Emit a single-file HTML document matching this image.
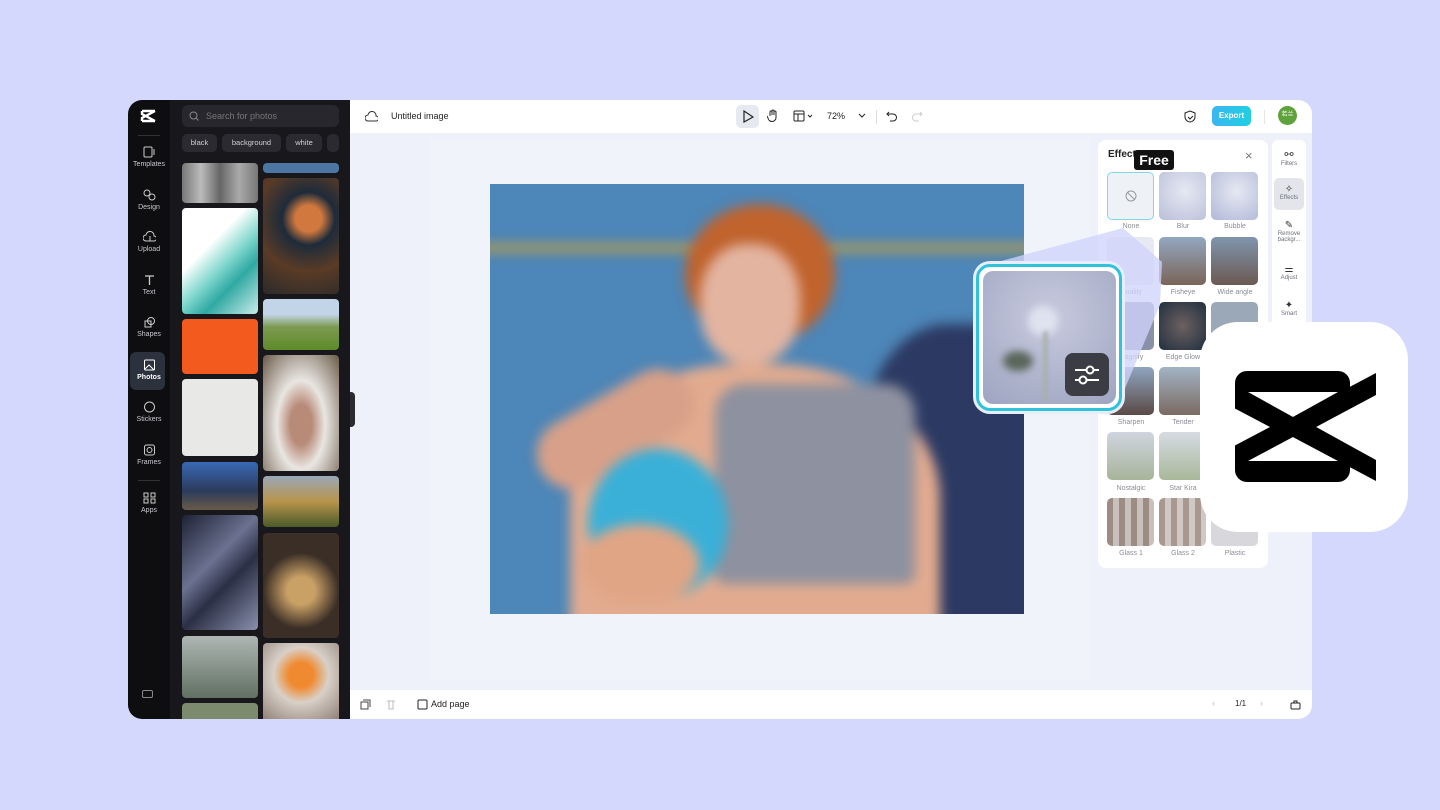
<!DOCTYPE html><html><head><meta charset="utf-8"><style>
*{box-sizing:border-box;margin:0;padding:0}
body{width:1440px;height:810px;background:#d4d8fd;font-family:"Liberation Sans",sans-serif;position:relative;overflow:hidden}
.a{position:absolute}
.frame{left:128px;top:100px;width:1184px;height:619px;border-radius:14px;overflow:hidden;background:#eef1f9}
.rail{left:0;top:0;width:42px;height:619px;background:#0e0e11}
.panel{left:42px;top:0;width:180px;height:619px;background:#18181c}
.ri{position:absolute;left:0;width:42px;text-align:center;color:#c9c9cf;font-size:7px}
.ri svg{display:block;margin:0 auto 3px}
.chip{position:absolute;top:34px;height:18px;border-radius:5px;background:#2a2a30;color:#d0d0d6;font-size:7.5px;line-height:18px;text-align:center}
.ph{position:absolute;border-radius:4px}
.top{left:222px;top:0;width:962px;height:34px;background:#fff;border-bottom:1px solid #eef0f4}
.bot{left:222px;top:590px;width:962px;height:29px;background:#fff}
.th{position:absolute;width:47px;height:48px;border-radius:5px}
.lb{position:absolute;width:60px;text-align:center;font-size:7px;color:#8a8d96}
.rr{position:absolute;left:1272px;width:34px;text-align:center;font-size:6px;color:#6c6f78}
</style></head><body>
<div class="a frame">
 <div class="a rail">
  <svg class="a" style="left:12px;top:9px" width="18" height="14" viewBox="0 0 18 14"><path d="M2 2h13M2 12h13M2 2v3l13 7M2 12v-3l13-7" stroke="#fff" stroke-width="2.4" fill="none"/></svg>
  <div class="a" style="left:10px;top:35px;width:22px;height:1px;background:#333"></div>
  <div class="ri" style="top:46px"><svg width="13" height="12"><rect x="1" y="1" width="8" height="10" rx="1" stroke="#ccc" fill="none"/><path d="M11 3v6" stroke="#ccc"/></svg>Templates</div>
  <div class="ri" style="top:89px"><svg width="13" height="12"><circle cx="4" cy="4" r="3" stroke="#ccc" fill="none"/><circle cx="9" cy="8" r="3" stroke="#ccc" fill="none"/></svg>Design</div>
  <div class="ri" style="top:131px"><svg width="13" height="12"><path d="M3 10a3 3 0 010-6a4 4 0 018 1a2.5 2.5 0 010 5z M7 5v5" stroke="#ccc" fill="none"/></svg>Upload</div>
  <div class="ri" style="top:174px"><svg width="13" height="12"><path d="M2 2h9M6.5 2v9" stroke="#ccc" stroke-width="1.3"/></svg>Text</div>
  <div class="ri" style="top:216px"><svg width="13" height="12"><circle cx="8" cy="5" r="3.5" stroke="#ccc" fill="none"/><rect x="2" y="5" width="6" height="6" stroke="#ccc" fill="none"/></svg>Shapes</div>
  <div class="a" style="left:2px;top:252px;width:35px;height:38px;border-radius:6px;background:#2b313d"></div>
  <div class="ri" style="top:259px;color:#fff;font-weight:bold"><svg width="13" height="12"><rect x="1.5" y="1" width="10" height="10" rx="1" stroke="#fff" fill="none"/><path d="M2 10l4-4 5 5" stroke="#fff" fill="none"/></svg>Photos</div>
  <div class="ri" style="top:301px"><svg width="13" height="12"><circle cx="6.5" cy="6" r="5" stroke="#ccc" fill="none"/></svg>Stickers</div>
  <div class="ri" style="top:344px"><svg width="13" height="12"><rect x="1.5" y="1" width="10" height="10" rx="2" stroke="#ccc" fill="none"/><circle cx="6.5" cy="6" r="2.5" stroke="#ccc" fill="none"/></svg>Frames</div>
  <div class="a" style="left:10px;top:380px;width:22px;height:1px;background:#333"></div>
  <div class="ri" style="top:392px"><svg width="13" height="12"><rect x="1" y="1" width="4" height="4" stroke="#ccc" fill="none"/><rect x="8" y="1" width="4" height="4" stroke="#ccc" fill="none"/><rect x="1" y="7" width="4" height="4" stroke="#ccc" fill="none"/><rect x="8" y="7" width="4" height="4" stroke="#ccc" fill="none"/></svg>Apps</div>
  <div class="a" style="left:14px;top:590px;width:11px;height:8px;border:1px solid #888;border-radius:2px"></div>
 </div>
 <div class="a panel">
  <div class="a" style="left:12px;top:5px;width:157px;height:22px;border-radius:6px;background:#27272d;color:#777;font-size:9px;line-height:22px;padding-left:24px">Search for photos</div>
  <svg class="a" style="left:19px;top:11px" width="10" height="10"><circle cx="4.5" cy="4.5" r="3.5" stroke="#888" fill="none"/><path d="M7 7l2.5 2.5" stroke="#888"/></svg>
  <div class="chip" style="left:12px;width:35px">black</div>
  <div class="chip" style="left:52px;width:59px">background</div>
  <div class="chip" style="left:116px;width:36px">white</div>
  <div class="chip" style="left:157px;width:12px"></div>
  <div class="ph" style="left:12px;top:63px;width:76px;height:40px;background:linear-gradient(90deg,#777,#bbb,#666,#aaa,#777)"></div>
  <div class="ph" style="left:12px;top:108px;width:76px;height:106px;background:linear-gradient(135deg,#fff 35%,#7cd6cc 55%,#2fa9a3 70%,#c9ecea)"></div>
  <div class="ph" style="left:12px;top:219px;width:76px;height:55px;background:#f25a1e"></div>
  <div class="ph" style="left:12px;top:279px;width:76px;height:77px;background:#e8e8e6"></div>
  <div class="ph" style="left:12px;top:362px;width:76px;height:48px;background:linear-gradient(#3a69b5,#2b3b5b 60%,#6a5a4a)"></div>
  <div class="ph" style="left:12px;top:415px;width:76px;height:115px;background:linear-gradient(135deg,#1e2235,#6b7190 40%,#2b2f45 60%,#8a90ad)"></div>
  <div class="ph" style="left:12px;top:536px;width:76px;height:62px;background:linear-gradient(#aeb7b4,#617062)"></div>
  <div class="ph" style="left:12px;top:603px;width:76px;height:20px;background:#7c8a6e"></div>
  <div class="ph" style="left:93px;top:63px;width:76px;height:10px;background:#4d76a3"></div>
  <div class="ph" style="left:93px;top:78px;width:76px;height:116px;background:radial-gradient(circle at 60% 35%,#d0783e 15%,#1e2b3a 30%,#5a3b26 60%,#2a2a2a)"></div>
  <div class="ph" style="left:93px;top:199px;width:76px;height:51px;background:linear-gradient(#c2d5e8 30%,#7d9a4f 55%,#5e8b2a)"></div>
  <div class="ph" style="left:93px;top:255px;width:76px;height:116px;background:radial-gradient(ellipse at 50% 60%,#b88a78 20%,#e9e6e2 45%,#6a5a48)"></div>
  <div class="ph" style="left:93px;top:376px;width:76px;height:51px;background:linear-gradient(#9aa8b9,#b8944b 50%,#4a5a2a)"></div>
  <div class="ph" style="left:93px;top:433px;width:76px;height:105px;background:radial-gradient(circle at 50% 55%,#c9a066 20%,#3a2e26 55%)"></div>
  <div class="ph" style="left:93px;top:543px;width:76px;height:80px;background:radial-gradient(circle at 50% 40%,#f08a30 20%,#d8d0c8 45%,#8a7a70)"></div>
 </div>
 <div class="a" style="left:222px;top:292px;width:5px;height:35px;background:#2a2a30;border-radius:0 4px 4px 0"></div>
 <div class="a top">
  <svg class="a" style="left:15px;top:11px" width="13" height="12"><path d="M3 10a3 3 0 010-6a4 4 0 018 1a2.5 2.5 0 010 5z" stroke="#333" fill="none"/></svg>
  <div class="a" style="left:41px;top:11px;font-size:9px;color:#222">Untitled image</div>
  <div class="a" style="left:386px;top:5px;width:23px;height:23px;border-radius:5px;background:#e7e9f0"></div>
  <svg class="a" style="left:392px;top:10px" width="12" height="13"><path d="M2 1l9 6-9 5z" stroke="#222" fill="none" stroke-width="1.2"/></svg>
  <svg class="a" style="left:417px;top:9px" width="12" height="14"><path d="M3 7V3a1 1 0 012 0v3V2a1 1 0 012 0v4V3a1 1 0 012 0v5a4 4 0 01-8 1l-1-2" stroke="#222" fill="none"/></svg>
  <svg class="a" style="left:443px;top:10px" width="22" height="12"><rect x="1" y="1" width="10" height="10" rx="1" stroke="#222" fill="none"/><path d="M1 4h10M5 4v7M15 5l2 2 2-2" stroke="#222" fill="none"/></svg>
  <div class="a" style="left:477px;top:11px;font-size:9px;color:#222">72%</div>
  <svg class="a" style="left:508px;top:13px" width="8" height="6"><path d="M1 1l3 3 3-3" stroke="#222" fill="none"/></svg>
  <div class="a" style="left:526px;top:10px;width:1px;height:14px;background:#ddd"></div>
  <svg class="a" style="left:536px;top:10px" width="12" height="12"><path d="M3 2L1 4l2 2M1 4h6a3 3 0 010 7H4" stroke="#222" fill="none"/></svg>
  <svg class="a" style="left:561px;top:10px" width="12" height="12"><path d="M9 2l2 2-2 2M11 4H5a3 3 0 000 7h3" stroke="#ccc" fill="none"/></svg>
  <svg class="a" style="left:834px;top:10px" width="12" height="13"><path d="M6 1l5 2v4c0 3-3 5-5 5s-5-2-5-5V3z M4 7l2 2 3-3" stroke="#222" fill="none"/></svg>
  <div class="a" style="left:862px;top:6px;width:39px;height:20px;border-radius:5px;background:linear-gradient(90deg,#3bb6f0,#20cfe0);color:#fff;font-size:8px;font-weight:bold;text-align:center;line-height:20px">Export</div>
  <div class="a" style="left:914px;top:10px;width:1px;height:14px;background:#e5e5e5"></div>
  <div class="a" style="left:928px;top:6px;width:19px;height:19px;border-radius:50%;background:#5ea23b;color:#fff;font-size:6px;text-align:center;line-height:19px">若兰</div>
 </div>
 <div class="a bot">
  <svg class="a" style="left:10px;top:9px" width="11" height="11"><rect x="1" y="3" width="7" height="7" stroke="#444" fill="none"/><path d="M3 1h7v7" stroke="#444" fill="none"/></svg>
  <svg class="a" style="left:36px;top:9px" width="10" height="11"><path d="M1 2h8M3 2v8h4V2" stroke="#bbb" fill="none"/></svg>
  <svg class="a" style="left:67px;top:9px" width="11" height="11"><rect x="1" y="1" width="9" height="9" rx="1" stroke="#222" fill="none"/></svg>
  <div class="a" style="left:81px;top:9px;font-size:9px;color:#222">Add page</div>
  <div class="a" style="left:862px;top:8px;font-size:9px;color:#bbb">‹</div>
  <div class="a" style="left:885px;top:9px;font-size:8px;color:#222">1/1</div>
  <div class="a" style="left:910px;top:8px;font-size:9px;color:#bbb">›</div>
  <svg class="a" style="left:940px;top:9px" width="11" height="11"><rect x="1" y="4" width="9" height="6" rx="1" stroke="#222" fill="none"/><path d="M4 4V2h3v2" stroke="#222" fill="none"/></svg>
 </div>
 <div class="a" style="left:302px;top:40px;width:660px;height:540px;background:#f1f3fa"></div>
 <div class="a" style="left:362px;top:84px;width:534px;height:430px;overflow:hidden;background:#4d86b8">
  <div style="position:absolute;inset:-20px;filter:blur(6px)">
   <div class="a" style="left:0;top:80px;width:580px;height:8px;background:#b99c4a"></div>
   <div class="a" style="left:390px;top:160px;width:220px;height:320px;background:#2c3a63;border-radius:40% 10% 0 0"></div>
   <div class="a" style="left:215px;top:40px;width:150px;height:140px;border-radius:50%;background:#c0632d"></div>
   <div class="a" style="left:230px;top:80px;width:100px;height:120px;border-radius:45%;background:#e3b4a0"></div>
   <div class="a" style="left:100px;top:200px;width:370px;height:300px;border-radius:45% 45% 0 0;background:#e2ab8f"></div>
   <div class="a" style="left:60px;top:230px;width:170px;height:70px;border-radius:40px;background:#d8a088;transform:rotate(-30deg)"></div>
   <div class="a" style="left:245px;top:220px;width:200px;height:200px;border-radius:30px 30px 10px 10px;background:#8e919f"></div>
   <div class="a" style="left:118px;top:285px;width:140px;height:150px;border-radius:50%;background:#3ab0d8"></div>
   <div class="a" style="left:110px;top:360px;width:120px;height:80px;border-radius:50%;background:#e0a585"></div>
  </div>
 </div>
</div>

<!-- effects panel -->
<div class="a" style="left:1098px;top:140px;width:170px;height:428px;background:#fff;border-radius:8px"></div>
<div class="a" style="left:1108px;top:149px;font-size:10px;font-weight:bold;color:#222">Effect</div>
<div class="a" style="left:1134px;top:150px;width:40px;height:20px;background:#111;border-radius:3px;color:#fff;font-size:14px;font-weight:bold;text-align:center;line-height:20px">Free</div>
<div class="a" style="left:1245px;top:148px;font-size:13px;color:#777">×</div>
<div class="th" style="left:1107px;top:172px;background:#eef1f6;border:1.5px solid #7fd9e3"></div>
<svg class="a" style="left:1125px;top:190px" width="12" height="12"><circle cx="6" cy="6" r="5" stroke="#999" fill="none"/><path d="M2.5 2.5l7 7" stroke="#999"/></svg>
<div class="th" style="left:1159px;top:172px;background:radial-gradient(circle at 55% 40%,#e6e8f2,#b9bfd8)"></div>
<div class="th" style="left:1211px;top:172px;background:radial-gradient(circle at 55% 40%,#e6e8f2,#b0b8d8)"></div>
<div class="th" style="left:1107px;top:237px;background:#e6e8f2"></div>
<div class="th" style="left:1159px;top:237px;background:linear-gradient(#93a8c0,#7a6458)"></div>
<div class="th" style="left:1211px;top:237px;background:linear-gradient(#7f95ad,#6b5a52)"></div>
<div class="th" style="left:1107px;top:302px;background:#8a90a8"></div>
<div class="th" style="left:1159px;top:302px;background:radial-gradient(#6d6060,#203040)"></div>
<div class="th" style="left:1211px;top:302px;background:#9aa8b8"></div>
<div class="th" style="left:1107px;top:367px;background:linear-gradient(#8fa5bf,#5a4a46)"></div>
<div class="th" style="left:1159px;top:367px;background:linear-gradient(#a3b3c5,#7a6a62)"></div>
<div class="th" style="left:1107px;top:432px;background:linear-gradient(#cfd5df,#a8b49a)"></div>
<div class="th" style="left:1159px;top:432px;background:linear-gradient(#d6dbe3,#a9b89a)"></div>
<div class="th" style="left:1107px;top:498px;background:repeating-linear-gradient(90deg,#9c8c84 0 6px,#c8c0bc 6px 12px)"></div>
<div class="th" style="left:1159px;top:498px;background:repeating-linear-gradient(90deg,#a89890 0 6px,#d0c8c4 6px 12px)"></div>
<div class="th" style="left:1211px;top:498px;background:#d8d8dc"></div>
<div class="lb" style="left:1101px;top:223px">None</div><div class="lb" style="left:1153px;top:223px">Blur</div><div class="lb" style="left:1205px;top:223px">Bubble</div>
<div class="lb" style="left:1101px;top:289px">Quality</div><div class="lb" style="left:1153px;top:289px">Fisheye</div><div class="lb" style="left:1205px;top:289px">Wide angle</div>
<div class="lb" style="left:1101px;top:354px">Magnify</div><div class="lb" style="left:1153px;top:354px">Edge Glow</div>
<div class="lb" style="left:1101px;top:419px">Sharpen</div><div class="lb" style="left:1153px;top:419px">Tender</div>
<div class="lb" style="left:1101px;top:485px">Nostalgic</div><div class="lb" style="left:1153px;top:485px">Star Kira</div>
<div class="lb" style="left:1101px;top:550px">Glass 1</div><div class="lb" style="left:1153px;top:550px">Glass 2</div><div class="lb" style="left:1205px;top:550px">Plastic</div>

<!-- right rail -->
<div class="a" style="left:1272px;top:140px;width:34px;height:200px;background:#fff;border-radius:6px"></div>
<div class="a" style="left:1274px;top:178px;width:30px;height:32px;background:#e3e5ea;border-radius:5px"></div>
<div class="rr" style="top:148px"><div style="font-size:11px;color:#333">⚯</div>Filters</div>
<div class="rr" style="top:184px"><div style="font-size:10px;color:#333">✧</div>Effects</div>
<div class="rr" style="top:220px"><div style="font-size:10px;color:#333">✎</div>Remove<br>backgr...</div>
<div class="rr" style="top:264px"><div style="font-size:10px;color:#333">⚌</div>Adjust</div>
<div class="rr" style="top:300px"><div style="font-size:10px;color:#333">✦</div>Smart</div>

<!-- wedge -->
<svg class="a" style="left:0;top:0" width="1440" height="810"><path d="M990 264L1123 228L1162 262L1160 305L1115 412Z" fill="#d0d3fb" opacity=".78"/></svg>

<!-- zoom callout -->
<div class="a" style="left:976px;top:264px;width:146px;height:147px;border-radius:14px;background:#fff;border:3px solid #2ec3d8;box-shadow:0 0 0 3px #e8ecfb"></div>
<div class="a" style="left:983px;top:271px;width:133px;height:133px;border-radius:10px;background:radial-gradient(circle at 50% 35%,#c8cbdf,#9ea4c0);overflow:hidden">
 <div class="a" style="left:45px;top:35px;width:30px;height:30px;border-radius:50%;background:#dfe2ef;filter:blur(4px)"></div>
 <div class="a" style="left:60px;top:60px;width:5px;height:70px;background:#a8b0b0;filter:blur(2px)"></div>
 <div class="a" style="left:20px;top:80px;width:30px;height:20px;border-radius:50%;background:#59665a;filter:blur(4px)"></div>
</div>
<div class="a" style="left:1065px;top:353px;width:44px;height:43px;border-radius:8px;background:#3c3d44"></div>
<svg class="a" style="left:1071px;top:360px" width="32" height="30"><path d="M4 10h24M4 20h24" stroke="#fff" stroke-width="2"/><circle cx="19" cy="10" r="3.5" fill="#3c3d44" stroke="#fff" stroke-width="2"/><circle cx="12" cy="20" r="3.5" fill="#3c3d44" stroke="#fff" stroke-width="2"/></svg>

<!-- capcut logo -->
<div class="a" style="left:1200px;top:322px;width:208px;height:210px;border-radius:38px;background:#fff"></div>
<svg class="a" style="left:0;top:0" width="1440" height="810">
 <rect x="1235" y="371" width="115" height="111" rx="12" fill="#000"/>
 <path d="M1248 392H1338L1293 417Z M1248 461H1338L1293 437Z M1234 408L1270 427L1234 446Z M1316 427L1377 393L1377 461Z" fill="#fff"/>
 <path d="M1293 417L1376 373L1376 395L1316 427Z M1316 427L1376 460L1376 481L1293 437Z" fill="#000"/>
</svg>
</body></html>
